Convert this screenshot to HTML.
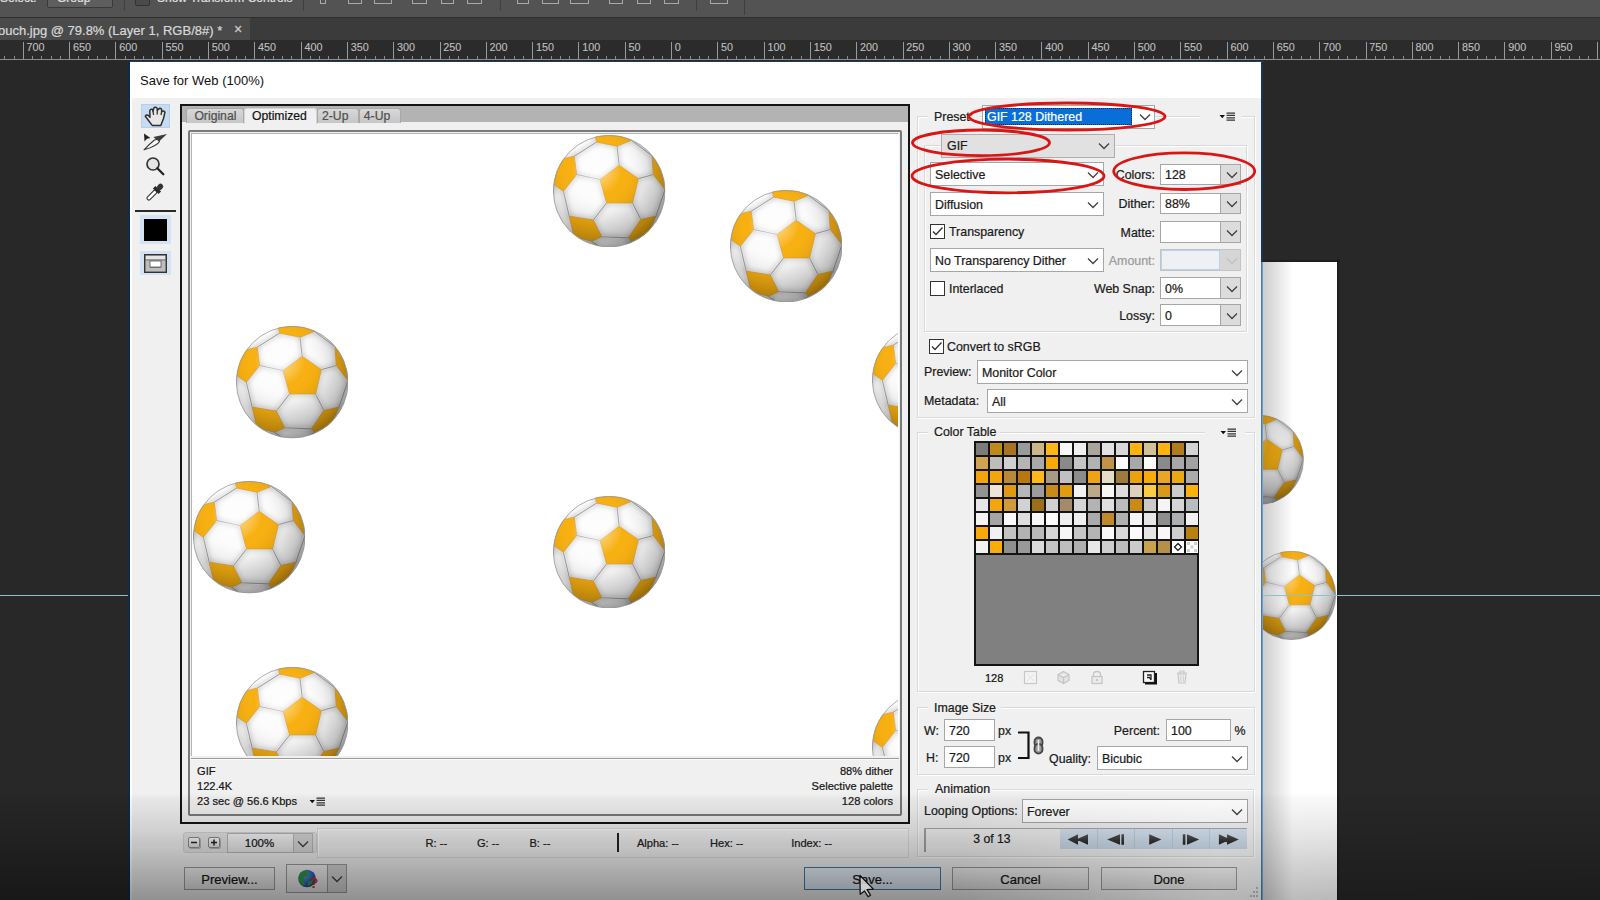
<!DOCTYPE html><html><head><meta charset="utf-8"><title>Save for Web</title><style>
*{margin:0;padding:0;box-sizing:border-box}
html,body{width:1600px;height:900px;overflow:hidden;background:#282828;font-family:"Liberation Sans",sans-serif;position:relative}
.a{position:absolute}
.t{position:absolute;white-space:nowrap;color:#1b1b1b;line-height:1;-webkit-text-stroke:0.22px}
</style></head><body>
<div class="a" style="left:0px;top:0px;width:1600px;height:17px;background:#535353"></div>
<div class="a" style="left:0px;top:17px;width:1600px;height:1px;background:#2e2e2e"></div>
<div class="a" style="left:0px;top:18px;width:1600px;height:22px;background:#3b3b3b"></div>
<div class="a" style="left:0px;top:18px;width:250px;height:22px;background:#4a4a4a"></div>
<div class="t" style="left:-2.00px;top:24.00px;font-size:13px;color:#d8d8d8;">ouch.jpg @ 79.8% (Layer 1, RGB/8#) *</div>
<div class="t" style="left:234.00px;top:22.15px;font-size:14px;color:#cfcfcf;">&#215;</div>
<div class="a" style="left:0px;top:40px;width:1600px;height:20px;background:#2b2b2b"></div>
<div class="a" style="left:0px;top:59px;width:1600px;height:1px;background:#8c8c8c"></div>
<div class="a" style="left:-23.5px;top:42px;width:1px;height:17px;background:#9a9a9a"></div>
<div class="t" style="left:-19.70px;top:42.06px;font-size:10.8px;color:#c0c0c0;-webkit-text-stroke:0.1px">750</div>
<div class="a" style="left:-14.2px;top:56px;width:1px;height:3px;background:#8a8a8a"></div>
<div class="a" style="left:-5.0px;top:56px;width:1px;height:3px;background:#8a8a8a"></div>
<div class="a" style="left:4.3px;top:56px;width:1px;height:3px;background:#8a8a8a"></div>
<div class="a" style="left:13.5px;top:56px;width:1px;height:3px;background:#8a8a8a"></div>
<div class="a" style="left:22.8px;top:42px;width:1px;height:17px;background:#9a9a9a"></div>
<div class="t" style="left:26.60px;top:42.06px;font-size:10.8px;color:#c0c0c0;-webkit-text-stroke:0.1px">700</div>
<div class="a" style="left:32.1px;top:56px;width:1px;height:3px;background:#8a8a8a"></div>
<div class="a" style="left:41.3px;top:56px;width:1px;height:3px;background:#8a8a8a"></div>
<div class="a" style="left:50.6px;top:56px;width:1px;height:3px;background:#8a8a8a"></div>
<div class="a" style="left:59.8px;top:56px;width:1px;height:3px;background:#8a8a8a"></div>
<div class="a" style="left:69.1px;top:42px;width:1px;height:17px;background:#9a9a9a"></div>
<div class="t" style="left:72.90px;top:42.06px;font-size:10.8px;color:#c0c0c0;-webkit-text-stroke:0.1px">650</div>
<div class="a" style="left:78.4px;top:56px;width:1px;height:3px;background:#8a8a8a"></div>
<div class="a" style="left:87.6px;top:56px;width:1px;height:3px;background:#8a8a8a"></div>
<div class="a" style="left:96.9px;top:56px;width:1px;height:3px;background:#8a8a8a"></div>
<div class="a" style="left:106.1px;top:56px;width:1px;height:3px;background:#8a8a8a"></div>
<div class="a" style="left:115.4px;top:42px;width:1px;height:17px;background:#9a9a9a"></div>
<div class="t" style="left:119.20px;top:42.06px;font-size:10.8px;color:#c0c0c0;-webkit-text-stroke:0.1px">600</div>
<div class="a" style="left:124.7px;top:56px;width:1px;height:3px;background:#8a8a8a"></div>
<div class="a" style="left:133.9px;top:56px;width:1px;height:3px;background:#8a8a8a"></div>
<div class="a" style="left:143.2px;top:56px;width:1px;height:3px;background:#8a8a8a"></div>
<div class="a" style="left:152.4px;top:56px;width:1px;height:3px;background:#8a8a8a"></div>
<div class="a" style="left:161.7px;top:42px;width:1px;height:17px;background:#9a9a9a"></div>
<div class="t" style="left:165.50px;top:42.06px;font-size:10.8px;color:#c0c0c0;-webkit-text-stroke:0.1px">550</div>
<div class="a" style="left:171.0px;top:56px;width:1px;height:3px;background:#8a8a8a"></div>
<div class="a" style="left:180.2px;top:56px;width:1px;height:3px;background:#8a8a8a"></div>
<div class="a" style="left:189.5px;top:56px;width:1px;height:3px;background:#8a8a8a"></div>
<div class="a" style="left:198.7px;top:56px;width:1px;height:3px;background:#8a8a8a"></div>
<div class="a" style="left:208.0px;top:42px;width:1px;height:17px;background:#9a9a9a"></div>
<div class="t" style="left:211.80px;top:42.06px;font-size:10.8px;color:#c0c0c0;-webkit-text-stroke:0.1px">500</div>
<div class="a" style="left:217.3px;top:56px;width:1px;height:3px;background:#8a8a8a"></div>
<div class="a" style="left:226.5px;top:56px;width:1px;height:3px;background:#8a8a8a"></div>
<div class="a" style="left:235.8px;top:56px;width:1px;height:3px;background:#8a8a8a"></div>
<div class="a" style="left:245.0px;top:56px;width:1px;height:3px;background:#8a8a8a"></div>
<div class="a" style="left:254.3px;top:42px;width:1px;height:17px;background:#9a9a9a"></div>
<div class="t" style="left:258.10px;top:42.06px;font-size:10.8px;color:#c0c0c0;-webkit-text-stroke:0.1px">450</div>
<div class="a" style="left:263.6px;top:56px;width:1px;height:3px;background:#8a8a8a"></div>
<div class="a" style="left:272.8px;top:56px;width:1px;height:3px;background:#8a8a8a"></div>
<div class="a" style="left:282.1px;top:56px;width:1px;height:3px;background:#8a8a8a"></div>
<div class="a" style="left:291.3px;top:56px;width:1px;height:3px;background:#8a8a8a"></div>
<div class="a" style="left:300.6px;top:42px;width:1px;height:17px;background:#9a9a9a"></div>
<div class="t" style="left:304.40px;top:42.06px;font-size:10.8px;color:#c0c0c0;-webkit-text-stroke:0.1px">400</div>
<div class="a" style="left:309.9px;top:56px;width:1px;height:3px;background:#8a8a8a"></div>
<div class="a" style="left:319.1px;top:56px;width:1px;height:3px;background:#8a8a8a"></div>
<div class="a" style="left:328.4px;top:56px;width:1px;height:3px;background:#8a8a8a"></div>
<div class="a" style="left:337.6px;top:56px;width:1px;height:3px;background:#8a8a8a"></div>
<div class="a" style="left:346.9px;top:42px;width:1px;height:17px;background:#9a9a9a"></div>
<div class="t" style="left:350.70px;top:42.06px;font-size:10.8px;color:#c0c0c0;-webkit-text-stroke:0.1px">350</div>
<div class="a" style="left:356.2px;top:56px;width:1px;height:3px;background:#8a8a8a"></div>
<div class="a" style="left:365.4px;top:56px;width:1px;height:3px;background:#8a8a8a"></div>
<div class="a" style="left:374.7px;top:56px;width:1px;height:3px;background:#8a8a8a"></div>
<div class="a" style="left:383.9px;top:56px;width:1px;height:3px;background:#8a8a8a"></div>
<div class="a" style="left:393.2px;top:42px;width:1px;height:17px;background:#9a9a9a"></div>
<div class="t" style="left:397.00px;top:42.06px;font-size:10.8px;color:#c0c0c0;-webkit-text-stroke:0.1px">300</div>
<div class="a" style="left:402.5px;top:56px;width:1px;height:3px;background:#8a8a8a"></div>
<div class="a" style="left:411.7px;top:56px;width:1px;height:3px;background:#8a8a8a"></div>
<div class="a" style="left:421.0px;top:56px;width:1px;height:3px;background:#8a8a8a"></div>
<div class="a" style="left:430.2px;top:56px;width:1px;height:3px;background:#8a8a8a"></div>
<div class="a" style="left:439.5px;top:42px;width:1px;height:17px;background:#9a9a9a"></div>
<div class="t" style="left:443.30px;top:42.06px;font-size:10.8px;color:#c0c0c0;-webkit-text-stroke:0.1px">250</div>
<div class="a" style="left:448.8px;top:56px;width:1px;height:3px;background:#8a8a8a"></div>
<div class="a" style="left:458.0px;top:56px;width:1px;height:3px;background:#8a8a8a"></div>
<div class="a" style="left:467.3px;top:56px;width:1px;height:3px;background:#8a8a8a"></div>
<div class="a" style="left:476.5px;top:56px;width:1px;height:3px;background:#8a8a8a"></div>
<div class="a" style="left:485.8px;top:42px;width:1px;height:17px;background:#9a9a9a"></div>
<div class="t" style="left:489.60px;top:42.06px;font-size:10.8px;color:#c0c0c0;-webkit-text-stroke:0.1px">200</div>
<div class="a" style="left:495.1px;top:56px;width:1px;height:3px;background:#8a8a8a"></div>
<div class="a" style="left:504.3px;top:56px;width:1px;height:3px;background:#8a8a8a"></div>
<div class="a" style="left:513.6px;top:56px;width:1px;height:3px;background:#8a8a8a"></div>
<div class="a" style="left:522.8px;top:56px;width:1px;height:3px;background:#8a8a8a"></div>
<div class="a" style="left:532.1px;top:42px;width:1px;height:17px;background:#9a9a9a"></div>
<div class="t" style="left:535.90px;top:42.06px;font-size:10.8px;color:#c0c0c0;-webkit-text-stroke:0.1px">150</div>
<div class="a" style="left:541.4px;top:56px;width:1px;height:3px;background:#8a8a8a"></div>
<div class="a" style="left:550.6px;top:56px;width:1px;height:3px;background:#8a8a8a"></div>
<div class="a" style="left:559.9px;top:56px;width:1px;height:3px;background:#8a8a8a"></div>
<div class="a" style="left:569.1px;top:56px;width:1px;height:3px;background:#8a8a8a"></div>
<div class="a" style="left:578.4px;top:42px;width:1px;height:17px;background:#9a9a9a"></div>
<div class="t" style="left:582.20px;top:42.06px;font-size:10.8px;color:#c0c0c0;-webkit-text-stroke:0.1px">100</div>
<div class="a" style="left:587.7px;top:56px;width:1px;height:3px;background:#8a8a8a"></div>
<div class="a" style="left:596.9px;top:56px;width:1px;height:3px;background:#8a8a8a"></div>
<div class="a" style="left:606.2px;top:56px;width:1px;height:3px;background:#8a8a8a"></div>
<div class="a" style="left:615.4px;top:56px;width:1px;height:3px;background:#8a8a8a"></div>
<div class="a" style="left:624.7px;top:42px;width:1px;height:17px;background:#9a9a9a"></div>
<div class="t" style="left:628.50px;top:42.06px;font-size:10.8px;color:#c0c0c0;-webkit-text-stroke:0.1px">50</div>
<div class="a" style="left:634.0px;top:56px;width:1px;height:3px;background:#8a8a8a"></div>
<div class="a" style="left:643.2px;top:56px;width:1px;height:3px;background:#8a8a8a"></div>
<div class="a" style="left:652.5px;top:56px;width:1px;height:3px;background:#8a8a8a"></div>
<div class="a" style="left:661.7px;top:56px;width:1px;height:3px;background:#8a8a8a"></div>
<div class="a" style="left:671.0px;top:42px;width:1px;height:17px;background:#9a9a9a"></div>
<div class="t" style="left:674.80px;top:42.06px;font-size:10.8px;color:#c0c0c0;-webkit-text-stroke:0.1px">0</div>
<div class="a" style="left:680.3px;top:56px;width:1px;height:3px;background:#8a8a8a"></div>
<div class="a" style="left:689.5px;top:56px;width:1px;height:3px;background:#8a8a8a"></div>
<div class="a" style="left:698.8px;top:56px;width:1px;height:3px;background:#8a8a8a"></div>
<div class="a" style="left:708.0px;top:56px;width:1px;height:3px;background:#8a8a8a"></div>
<div class="a" style="left:717.3px;top:42px;width:1px;height:17px;background:#9a9a9a"></div>
<div class="t" style="left:721.10px;top:42.06px;font-size:10.8px;color:#c0c0c0;-webkit-text-stroke:0.1px">50</div>
<div class="a" style="left:726.6px;top:56px;width:1px;height:3px;background:#8a8a8a"></div>
<div class="a" style="left:735.8px;top:56px;width:1px;height:3px;background:#8a8a8a"></div>
<div class="a" style="left:745.1px;top:56px;width:1px;height:3px;background:#8a8a8a"></div>
<div class="a" style="left:754.3px;top:56px;width:1px;height:3px;background:#8a8a8a"></div>
<div class="a" style="left:763.6px;top:42px;width:1px;height:17px;background:#9a9a9a"></div>
<div class="t" style="left:767.40px;top:42.06px;font-size:10.8px;color:#c0c0c0;-webkit-text-stroke:0.1px">100</div>
<div class="a" style="left:772.9px;top:56px;width:1px;height:3px;background:#8a8a8a"></div>
<div class="a" style="left:782.1px;top:56px;width:1px;height:3px;background:#8a8a8a"></div>
<div class="a" style="left:791.4px;top:56px;width:1px;height:3px;background:#8a8a8a"></div>
<div class="a" style="left:800.6px;top:56px;width:1px;height:3px;background:#8a8a8a"></div>
<div class="a" style="left:809.9px;top:42px;width:1px;height:17px;background:#9a9a9a"></div>
<div class="t" style="left:813.70px;top:42.06px;font-size:10.8px;color:#c0c0c0;-webkit-text-stroke:0.1px">150</div>
<div class="a" style="left:819.2px;top:56px;width:1px;height:3px;background:#8a8a8a"></div>
<div class="a" style="left:828.4px;top:56px;width:1px;height:3px;background:#8a8a8a"></div>
<div class="a" style="left:837.7px;top:56px;width:1px;height:3px;background:#8a8a8a"></div>
<div class="a" style="left:846.9px;top:56px;width:1px;height:3px;background:#8a8a8a"></div>
<div class="a" style="left:856.2px;top:42px;width:1px;height:17px;background:#9a9a9a"></div>
<div class="t" style="left:860.00px;top:42.06px;font-size:10.8px;color:#c0c0c0;-webkit-text-stroke:0.1px">200</div>
<div class="a" style="left:865.5px;top:56px;width:1px;height:3px;background:#8a8a8a"></div>
<div class="a" style="left:874.7px;top:56px;width:1px;height:3px;background:#8a8a8a"></div>
<div class="a" style="left:884.0px;top:56px;width:1px;height:3px;background:#8a8a8a"></div>
<div class="a" style="left:893.2px;top:56px;width:1px;height:3px;background:#8a8a8a"></div>
<div class="a" style="left:902.5px;top:42px;width:1px;height:17px;background:#9a9a9a"></div>
<div class="t" style="left:906.30px;top:42.06px;font-size:10.8px;color:#c0c0c0;-webkit-text-stroke:0.1px">250</div>
<div class="a" style="left:911.8px;top:56px;width:1px;height:3px;background:#8a8a8a"></div>
<div class="a" style="left:921.0px;top:56px;width:1px;height:3px;background:#8a8a8a"></div>
<div class="a" style="left:930.3px;top:56px;width:1px;height:3px;background:#8a8a8a"></div>
<div class="a" style="left:939.5px;top:56px;width:1px;height:3px;background:#8a8a8a"></div>
<div class="a" style="left:948.8px;top:42px;width:1px;height:17px;background:#9a9a9a"></div>
<div class="t" style="left:952.60px;top:42.06px;font-size:10.8px;color:#c0c0c0;-webkit-text-stroke:0.1px">300</div>
<div class="a" style="left:958.1px;top:56px;width:1px;height:3px;background:#8a8a8a"></div>
<div class="a" style="left:967.3px;top:56px;width:1px;height:3px;background:#8a8a8a"></div>
<div class="a" style="left:976.6px;top:56px;width:1px;height:3px;background:#8a8a8a"></div>
<div class="a" style="left:985.8px;top:56px;width:1px;height:3px;background:#8a8a8a"></div>
<div class="a" style="left:995.1px;top:42px;width:1px;height:17px;background:#9a9a9a"></div>
<div class="t" style="left:998.90px;top:42.06px;font-size:10.8px;color:#c0c0c0;-webkit-text-stroke:0.1px">350</div>
<div class="a" style="left:1004.4px;top:56px;width:1px;height:3px;background:#8a8a8a"></div>
<div class="a" style="left:1013.6px;top:56px;width:1px;height:3px;background:#8a8a8a"></div>
<div class="a" style="left:1022.9px;top:56px;width:1px;height:3px;background:#8a8a8a"></div>
<div class="a" style="left:1032.1px;top:56px;width:1px;height:3px;background:#8a8a8a"></div>
<div class="a" style="left:1041.4px;top:42px;width:1px;height:17px;background:#9a9a9a"></div>
<div class="t" style="left:1045.20px;top:42.06px;font-size:10.8px;color:#c0c0c0;-webkit-text-stroke:0.1px">400</div>
<div class="a" style="left:1050.7px;top:56px;width:1px;height:3px;background:#8a8a8a"></div>
<div class="a" style="left:1059.9px;top:56px;width:1px;height:3px;background:#8a8a8a"></div>
<div class="a" style="left:1069.2px;top:56px;width:1px;height:3px;background:#8a8a8a"></div>
<div class="a" style="left:1078.4px;top:56px;width:1px;height:3px;background:#8a8a8a"></div>
<div class="a" style="left:1087.7px;top:42px;width:1px;height:17px;background:#9a9a9a"></div>
<div class="t" style="left:1091.50px;top:42.06px;font-size:10.8px;color:#c0c0c0;-webkit-text-stroke:0.1px">450</div>
<div class="a" style="left:1097.0px;top:56px;width:1px;height:3px;background:#8a8a8a"></div>
<div class="a" style="left:1106.2px;top:56px;width:1px;height:3px;background:#8a8a8a"></div>
<div class="a" style="left:1115.5px;top:56px;width:1px;height:3px;background:#8a8a8a"></div>
<div class="a" style="left:1124.7px;top:56px;width:1px;height:3px;background:#8a8a8a"></div>
<div class="a" style="left:1134.0px;top:42px;width:1px;height:17px;background:#9a9a9a"></div>
<div class="t" style="left:1137.80px;top:42.06px;font-size:10.8px;color:#c0c0c0;-webkit-text-stroke:0.1px">500</div>
<div class="a" style="left:1143.3px;top:56px;width:1px;height:3px;background:#8a8a8a"></div>
<div class="a" style="left:1152.5px;top:56px;width:1px;height:3px;background:#8a8a8a"></div>
<div class="a" style="left:1161.8px;top:56px;width:1px;height:3px;background:#8a8a8a"></div>
<div class="a" style="left:1171.0px;top:56px;width:1px;height:3px;background:#8a8a8a"></div>
<div class="a" style="left:1180.3px;top:42px;width:1px;height:17px;background:#9a9a9a"></div>
<div class="t" style="left:1184.10px;top:42.06px;font-size:10.8px;color:#c0c0c0;-webkit-text-stroke:0.1px">550</div>
<div class="a" style="left:1189.6px;top:56px;width:1px;height:3px;background:#8a8a8a"></div>
<div class="a" style="left:1198.8px;top:56px;width:1px;height:3px;background:#8a8a8a"></div>
<div class="a" style="left:1208.1px;top:56px;width:1px;height:3px;background:#8a8a8a"></div>
<div class="a" style="left:1217.3px;top:56px;width:1px;height:3px;background:#8a8a8a"></div>
<div class="a" style="left:1226.6px;top:42px;width:1px;height:17px;background:#9a9a9a"></div>
<div class="t" style="left:1230.40px;top:42.06px;font-size:10.8px;color:#c0c0c0;-webkit-text-stroke:0.1px">600</div>
<div class="a" style="left:1235.9px;top:56px;width:1px;height:3px;background:#8a8a8a"></div>
<div class="a" style="left:1245.1px;top:56px;width:1px;height:3px;background:#8a8a8a"></div>
<div class="a" style="left:1254.4px;top:56px;width:1px;height:3px;background:#8a8a8a"></div>
<div class="a" style="left:1263.6px;top:56px;width:1px;height:3px;background:#8a8a8a"></div>
<div class="a" style="left:1272.9px;top:42px;width:1px;height:17px;background:#9a9a9a"></div>
<div class="t" style="left:1276.70px;top:42.06px;font-size:10.8px;color:#c0c0c0;-webkit-text-stroke:0.1px">650</div>
<div class="a" style="left:1282.2px;top:56px;width:1px;height:3px;background:#8a8a8a"></div>
<div class="a" style="left:1291.4px;top:56px;width:1px;height:3px;background:#8a8a8a"></div>
<div class="a" style="left:1300.7px;top:56px;width:1px;height:3px;background:#8a8a8a"></div>
<div class="a" style="left:1309.9px;top:56px;width:1px;height:3px;background:#8a8a8a"></div>
<div class="a" style="left:1319.2px;top:42px;width:1px;height:17px;background:#9a9a9a"></div>
<div class="t" style="left:1323.00px;top:42.06px;font-size:10.8px;color:#c0c0c0;-webkit-text-stroke:0.1px">700</div>
<div class="a" style="left:1328.5px;top:56px;width:1px;height:3px;background:#8a8a8a"></div>
<div class="a" style="left:1337.7px;top:56px;width:1px;height:3px;background:#8a8a8a"></div>
<div class="a" style="left:1347.0px;top:56px;width:1px;height:3px;background:#8a8a8a"></div>
<div class="a" style="left:1356.2px;top:56px;width:1px;height:3px;background:#8a8a8a"></div>
<div class="a" style="left:1365.5px;top:42px;width:1px;height:17px;background:#9a9a9a"></div>
<div class="t" style="left:1369.30px;top:42.06px;font-size:10.8px;color:#c0c0c0;-webkit-text-stroke:0.1px">750</div>
<div class="a" style="left:1374.8px;top:56px;width:1px;height:3px;background:#8a8a8a"></div>
<div class="a" style="left:1384.0px;top:56px;width:1px;height:3px;background:#8a8a8a"></div>
<div class="a" style="left:1393.3px;top:56px;width:1px;height:3px;background:#8a8a8a"></div>
<div class="a" style="left:1402.5px;top:56px;width:1px;height:3px;background:#8a8a8a"></div>
<div class="a" style="left:1411.8px;top:42px;width:1px;height:17px;background:#9a9a9a"></div>
<div class="t" style="left:1415.60px;top:42.06px;font-size:10.8px;color:#c0c0c0;-webkit-text-stroke:0.1px">800</div>
<div class="a" style="left:1421.1px;top:56px;width:1px;height:3px;background:#8a8a8a"></div>
<div class="a" style="left:1430.3px;top:56px;width:1px;height:3px;background:#8a8a8a"></div>
<div class="a" style="left:1439.6px;top:56px;width:1px;height:3px;background:#8a8a8a"></div>
<div class="a" style="left:1448.8px;top:56px;width:1px;height:3px;background:#8a8a8a"></div>
<div class="a" style="left:1458.1px;top:42px;width:1px;height:17px;background:#9a9a9a"></div>
<div class="t" style="left:1461.90px;top:42.06px;font-size:10.8px;color:#c0c0c0;-webkit-text-stroke:0.1px">850</div>
<div class="a" style="left:1467.4px;top:56px;width:1px;height:3px;background:#8a8a8a"></div>
<div class="a" style="left:1476.6px;top:56px;width:1px;height:3px;background:#8a8a8a"></div>
<div class="a" style="left:1485.9px;top:56px;width:1px;height:3px;background:#8a8a8a"></div>
<div class="a" style="left:1495.1px;top:56px;width:1px;height:3px;background:#8a8a8a"></div>
<div class="a" style="left:1504.4px;top:42px;width:1px;height:17px;background:#9a9a9a"></div>
<div class="t" style="left:1508.20px;top:42.06px;font-size:10.8px;color:#c0c0c0;-webkit-text-stroke:0.1px">900</div>
<div class="a" style="left:1513.7px;top:56px;width:1px;height:3px;background:#8a8a8a"></div>
<div class="a" style="left:1522.9px;top:56px;width:1px;height:3px;background:#8a8a8a"></div>
<div class="a" style="left:1532.2px;top:56px;width:1px;height:3px;background:#8a8a8a"></div>
<div class="a" style="left:1541.4px;top:56px;width:1px;height:3px;background:#8a8a8a"></div>
<div class="a" style="left:1550.7px;top:42px;width:1px;height:17px;background:#9a9a9a"></div>
<div class="t" style="left:1554.50px;top:42.06px;font-size:10.8px;color:#c0c0c0;-webkit-text-stroke:0.1px">950</div>
<div class="a" style="left:1560.0px;top:56px;width:1px;height:3px;background:#8a8a8a"></div>
<div class="a" style="left:1569.2px;top:56px;width:1px;height:3px;background:#8a8a8a"></div>
<div class="a" style="left:1578.5px;top:56px;width:1px;height:3px;background:#8a8a8a"></div>
<div class="a" style="left:1587.7px;top:56px;width:1px;height:3px;background:#8a8a8a"></div>
<div class="a" style="left:1597.0px;top:42px;width:1px;height:17px;background:#9a9a9a"></div>
<div class="t" style="left:1600.80px;top:42.06px;font-size:10.8px;color:#c0c0c0;-webkit-text-stroke:0.1px">1000</div>
<div class="a" style="left:1606.3px;top:56px;width:1px;height:3px;background:#8a8a8a"></div>
<div class="a" style="left:1615.5px;top:56px;width:1px;height:3px;background:#8a8a8a"></div>
<div class="a" style="left:1624.8px;top:56px;width:1px;height:3px;background:#8a8a8a"></div>
<div class="a" style="left:1634.0px;top:56px;width:1px;height:3px;background:#8a8a8a"></div>
<div class="a" style="left:47px;top:-6px;width:66px;height:14px;background:#5e5e5e;border:1px solid #3a3a3a;border-radius:2px"></div>
<div class="a" style="left:124px;top:0px;width:1px;height:11px;background:#3f3f3f"></div>
<div class="a" style="left:135px;top:-4px;width:15px;height:10px;background:#4a4a4a;border:1px solid #333;border-radius:2px"></div>
<div class="t" style="left:0.00px;top:-8.16px;font-size:12px;color:#e0e0e0;">Select:</div>
<div class="t" style="left:57.00px;top:-8.16px;font-size:12px;color:#e0e0e0;">Group</div>
<div class="t" style="left:157.00px;top:-8.16px;font-size:12px;color:#e0e0e0;">Show Transform Controls</div>
<div class="a" style="left:303px;top:0px;width:1px;height:11px;background:#3f3f3f"></div>
<div class="a" style="left:500px;top:0px;width:1px;height:11px;background:#3f3f3f"></div>
<div class="a" style="left:696px;top:0px;width:1px;height:11px;background:#3f3f3f"></div>
<div class="a" style="left:744px;top:0px;width:1px;height:15px;background:#3f3f3f"></div>
<div class="a" style="left:320px;top:-3px;width:6px;height:7px;border:1.2px solid #a8a8a8;border-top:none"></div>
<div class="a" style="left:348px;top:-3px;width:14px;height:7px;border:1.2px solid #a8a8a8;border-top:none"></div>
<div class="a" style="left:374px;top:-3px;width:18px;height:7px;border:1.2px solid #a8a8a8;border-top:none"></div>
<div class="a" style="left:412px;top:-3px;width:15px;height:7px;border:1.2px solid #a8a8a8;border-top:none"></div>
<div class="a" style="left:441px;top:-3px;width:13px;height:7px;border:1.2px solid #a8a8a8;border-top:none"></div>
<div class="a" style="left:467px;top:-3px;width:15px;height:7px;border:1.2px solid #a8a8a8;border-top:none"></div>
<div class="a" style="left:517px;top:-3px;width:12px;height:7px;border:1.2px solid #a8a8a8;border-top:none"></div>
<div class="a" style="left:542px;top:-3px;width:17px;height:7px;border:1.2px solid #a8a8a8;border-top:none"></div>
<div class="a" style="left:570px;top:-3px;width:19px;height:7px;border:1.2px solid #a8a8a8;border-top:none"></div>
<div class="a" style="left:609px;top:-3px;width:14px;height:7px;border:1.2px solid #a8a8a8;border-top:none"></div>
<div class="a" style="left:637px;top:-3px;width:14px;height:7px;border:1.2px solid #a8a8a8;border-top:none"></div>
<div class="a" style="left:664px;top:-3px;width:15px;height:7px;border:1.2px solid #a8a8a8;border-top:none"></div>
<div class="a" style="left:710px;top:-3px;width:18px;height:7px;border:1.2px solid #a8a8a8;border-top:none"></div>
<div class="a" style="left:0px;top:595px;width:130px;height:1px;background:#86c3d3"></div>
<div class="a" style="left:1263px;top:595px;width:337px;height:1px;background:#86c3d3"></div>
<svg width="0" height="0" style="position:absolute"><defs>
<radialGradient id="shade" cx="-22" cy="-38" r="142" gradientUnits="userSpaceOnUse">
<stop offset="0" stop-color="#fff" stop-opacity="0.6"/><stop offset="0.32" stop-color="#fff" stop-opacity="0"/><stop offset="0.55" stop-color="#000" stop-opacity="0.05"/><stop offset="0.75" stop-color="#000" stop-opacity="0.17"/><stop offset="0.9" stop-color="#000" stop-opacity="0.28"/><stop offset="1" stop-color="#000" stop-opacity="0.4"/></radialGradient>
<clipPath id="bclip"><circle cx="0" cy="0" r="100"/></clipPath><filter id="bblur" x="-20%" y="-20%" width="140%" height="140%"><feGaussianBlur stdDeviation="4"/></filter>
<symbol id="ball" viewBox="-100 -100 200 200">
<circle cx="0" cy="0" r="100" fill="#fcfcfc"/>
<g clip-path="url(#bclip)">
<g filter="url(#bblur)" stroke="#000" stroke-opacity="0.12" stroke-width="9" fill="none"><path d="M17.8,-46 L13.9,-80.1 M51.9,-22.3 L78.6,-29.7 M41.5,20.8 L56.4,50.4 M-4.5,20.8 L-28.2,51.3 M-16.3,-20.8 L-57.9,-29.7 M-22.3,-87.5 L-62.3,-62.3 M39.5,-90.5 L76.3,-62.9 M-81.6,0 L-71.2,44.5 M-13.4,81 L34.1,83.1 M99.4,-3 L83.1,44.5 M-31.2,89 L-20,97 M40.1,89 L30,95 M-98.5,-11.9 L-99,5"/><polygon points="17.8,-46.0 51.9,-22.3 41.5,20.8 -4.5,20.8 -16.3,-20.8"/><polygon points="-24.6,-97.0 -4.5,-99.4 25.2,-97.9 39.5,-90.5 13.9,-80.1 -22.3,-87.5"/><polygon points="-62.3,-62.3 -57.9,-29.7 -81.6,0.0 -98.5,-11.9 -93.0,-42.0 -80.0,-58.0"/><polygon points="76.3,-62.9 90.0,-42.0 97.0,-20.0 99.4,-3.0 78.6,-29.7"/><polygon points="-71.2,44.5 -28.2,51.3 -13.4,81.0 -31.2,89.0 -50.0,84.0 -63.8,75.0"/><polygon points="56.4,50.4 83.1,44.5 75.0,62.0 68.2,74.2 40.1,89.0 34.1,83.1"/></g>
<path d="M17.8,-46 L13.9,-80.1 M51.9,-22.3 L78.6,-29.7 M41.5,20.8 L56.4,50.4 M-4.5,20.8 L-28.2,51.3 M-16.3,-20.8 L-57.9,-29.7 M-22.3,-87.5 L-62.3,-62.3 M39.5,-90.5 L76.3,-62.9 M-81.6,0 L-71.2,44.5 M-13.4,81 L34.1,83.1 M99.4,-3 L83.1,44.5 M-31.2,89 L-20,97 M40.1,89 L30,95 M-98.5,-11.9 L-99,5" stroke="#fff" stroke-width="4" fill="none" stroke-opacity="0.7"/>
<path d="M17.8,-46 L13.9,-80.1 M51.9,-22.3 L78.6,-29.7 M41.5,20.8 L56.4,50.4 M-4.5,20.8 L-28.2,51.3 M-16.3,-20.8 L-57.9,-29.7 M-22.3,-87.5 L-62.3,-62.3 M39.5,-90.5 L76.3,-62.9 M-81.6,0 L-71.2,44.5 M-13.4,81 L34.1,83.1 M99.4,-3 L83.1,44.5 M-31.2,89 L-20,97 M40.1,89 L30,95 M-98.5,-11.9 L-99,5" stroke="#a4a4a4" stroke-width="2" fill="none"/>
<g fill="#f8b010" stroke="#dca540" stroke-width="1.6">
<polygon points="17.8,-46.0 51.9,-22.3 41.5,20.8 -4.5,20.8 -16.3,-20.8"/><polygon points="-24.6,-97.0 -4.5,-99.4 25.2,-97.9 39.5,-90.5 13.9,-80.1 -22.3,-87.5"/><polygon points="-62.3,-62.3 -57.9,-29.7 -81.6,0.0 -98.5,-11.9 -93.0,-42.0 -80.0,-58.0"/><polygon points="76.3,-62.9 90.0,-42.0 97.0,-20.0 99.4,-3.0 78.6,-29.7"/><polygon points="-71.2,44.5 -28.2,51.3 -13.4,81.0 -31.2,89.0 -50.0,84.0 -63.8,75.0"/><polygon points="56.4,50.4 83.1,44.5 75.0,62.0 68.2,74.2 40.1,89.0 34.1,83.1"/>
</g>
<circle cx="0" cy="0" r="100" fill="url(#shade)"/>
</g>
<circle cx="0" cy="0" r="99.3" fill="none" stroke="#9a9a9a" stroke-width="1.4"/>
</symbol></defs></svg>
<div class="a" style="left:1263px;top:259px;width:77px;height:3px;background:linear-gradient(rgba(0,0,0,0),rgba(0,0,0,.35))"></div>
<div class="a" style="left:1337px;top:259px;width:3px;height:641px;background:linear-gradient(to right,rgba(0,0,0,.35),rgba(0,0,0,0))"></div>
<div class="a" style="left:1263px;top:262px;width:74px;height:638px;background:#fff;overflow:hidden">
<svg class="a" style="left:-49.2px;top:153.1px" width="89.8" height="89.8"><use href="#ball" width="100%" height="100%"/></svg>
<svg class="a" style="left:-15.8px;top:288.5px" width="89.0" height="89.0"><use href="#ball" width="100%" height="100%"/></svg>
<div class="a" style="left:0;top:0;width:30px;height:638px;background:linear-gradient(to right,rgba(0,0,0,.2),rgba(0,0,0,0))"></div>
</div>
<div class="a" style="left:1263px;top:595px;width:337px;height:1px;background:#86c3d3"></div>
<div class="a" style="left:128px;top:61px;width:1135px;height:839px;background:#f0f0f0;border:1px solid #1c3f63;border-left:2px solid #0e2b4b;border-bottom:none"></div>
<div class="a" style="left:130px;top:98px;width:1.5px;height:802px;background:#fff"></div>
<div class="a" style="left:130px;top:62px;width:1132px;height:36px;background:#fff"></div>
<div class="a" style="left:1261px;top:62px;width:2px;height:200px;background:#133656"></div>
<div class="a" style="left:1261px;top:262px;width:2px;height:638px;background:linear-gradient(to right,#2f6aa0,#7fb2de)"></div>
<div class="t" style="left:140.00px;top:73.50px;font-size:13px;color:#111;-webkit-text-stroke:0">Save for Web (100%)</div>
<div class="a" style="left:141px;top:104px;width:29px;height:24px;background:#c6dcf2;border:1px solid #b3cfea"></div>
<div class="a" style="left:135px;top:210px;width:41px;height:1.5px;background:#2a2a2a"></div>
<div class="a" style="left:140px;top:215px;width:31px;height:29px;background:#d3e3f3"></div>
<div class="a" style="left:144px;top:219px;width:23px;height:22px;background:#000"></div>
<div class="a" style="left:140px;top:251px;width:31px;height:24px;background:#d3e3f3"></div>
<svg class="a" style="left:136px;top:100px" width="40" height="30" viewBox="0 0 40 30"><path d="M9.3,16.3 Q10.4,14.2 12.3,15.3 L14,17.2 L13.8,11 Q14.2,8.9 16,9.3 Q16.8,9.6 17,11.5 L17.6,8.6 Q18.8,6.5 20.6,7.6 Q21.3,8.2 21.3,10.5 L22.4,9.2 Q24,7.6 25.4,9 Q25.9,9.6 25.6,12 L26.4,11.4 Q28.2,10.5 28.9,12.3 L27.6,18.2 L24.8,25.4 L16.2,25.4 Z" fill="#e6e6e6" stroke="#2e2e2e" stroke-width="1.5" stroke-linejoin="round"/><path d="M17,11.5 L17.6,15 M21.3,10.5 L21.2,14.5 M25.6,12 L25,15" stroke="#333" stroke-width="1.3"/></svg>
<svg class="a" style="left:142px;top:131px" width="26" height="20" viewBox="0 0 26 20"><path d="M2,2.5 L8.5,7 L5,7.8 L2.5,10.5 Z" fill="#222"/><path d="M11.5,6 L25,3 L16.5,11 Z" fill="#3c3c3c"/><path d="M12.5,9 Q16,7.5 17.5,10.5 Q15,15 2,18.8 Q8,12.5 12.5,9 Z" fill="#fafafa" stroke="#333" stroke-width="1.1" stroke-linejoin="round"/></svg>
<svg class="a" style="left:144px;top:155px" width="22" height="22" viewBox="0 0 22 22"><circle cx="9" cy="9" r="6" fill="#e4e4e4" stroke="#333" stroke-width="1.7"/><path d="M13.3,13.3 L19.3,19.3" stroke="#222" stroke-width="2.3" stroke-linecap="round"/></svg>
<svg class="a" style="left:144px;top:181px" width="22" height="22" viewBox="0 0 22 22"><g transform="rotate(-45 11 11)"><rect x="0.5" y="9.2" width="12" height="3.6" rx="1.5" fill="#fff" stroke="#333" stroke-width="1.1"/><rect x="12" y="7" width="3.6" height="8" fill="#2a2a2a"/><rect x="15" y="8.3" width="6.5" height="5.4" rx="2.6" fill="#333"/></g></svg>
<svg class="a" style="left:144px;top:254px" width="23" height="19" viewBox="0 0 23 19"><rect x="0.7" y="0.7" width="21.6" height="17.6" fill="#bdbdbd" stroke="#333" stroke-width="1.4"/><rect x="2" y="2" width="19" height="3" fill="#e6e6e6"/><rect x="6" y="7" width="11" height="6" fill="#fff" stroke="#555" stroke-width="0.8"/><path d="M1,6 L22,6 M6,13.5 L17,13.5" stroke="#666" stroke-width="0.8"/></svg>
<div class="a" style="left:180px;top:104px;width:730px;height:720px;background:#f0f0f0;border:2px solid #151515"></div>
<div class="a" style="left:182px;top:106px;width:726px;height:16px;background:#b3b3b3"></div>
<div class="a" style="left:186px;top:108px;width:58px;height:15px;background:linear-gradient(#d8d8d8,#c6c6c6);border:1px solid #a8a8a8;border-bottom:none;border-radius:3px 3px 0 0"></div>
<div class="t" style="left:194.40px;top:110.07px;font-size:12.2px;color:#505050;">Original</div>
<div class="a" style="left:317px;top:108px;width:42px;height:15px;background:linear-gradient(#d8d8d8,#c6c6c6);border:1px solid #a8a8a8;border-bottom:none;border-radius:3px 3px 0 0"></div>
<div class="t" style="left:322.00px;top:110.07px;font-size:12.2px;color:#505050;">2-Up</div>
<div class="a" style="left:359px;top:108px;width:42px;height:15px;background:linear-gradient(#d8d8d8,#c6c6c6);border:1px solid #a8a8a8;border-bottom:none;border-radius:3px 3px 0 0"></div>
<div class="t" style="left:363.80px;top:110.07px;font-size:12.2px;color:#505050;">4-Up</div>
<div class="a" style="left:244px;top:108px;width:73px;height:16px;background:#f0f0f0;border:1px solid #d6d6d6;border-bottom:none;border-radius:3px 3px 0 0"></div>
<div class="t" style="left:252.00px;top:110.07px;font-size:12.2px;color:#111;-webkit-text-stroke:0.2px #111">Optimized</div>
<div class="a" style="left:188px;top:130px;width:714px;height:686px;border:2px solid #7a7a7a;border-radius:2px"></div>
<div class="a" style="left:191px;top:133px;width:708px;height:623px;border-top:1px solid #b4b4b4;border-left:1px solid #b4b4b4;border-right:1px solid #fff"></div>
<div class="a" style="left:192px;top:134px;width:706px;height:622px;background:#fff;overflow:hidden">
<svg class="a" style="left:361.4px;top:0.5px" width="112.4" height="112.4"><use href="#ball" width="100%" height="100%"/></svg>
<svg class="a" style="left:537.6px;top:55.6px" width="112.4" height="112.4"><use href="#ball" width="100%" height="100%"/></svg>
<svg class="a" style="left:43.8px;top:192.3px" width="112.4" height="112.4"><use href="#ball" width="100%" height="100%"/></svg>
<svg class="a" style="left:0.5px;top:347.3px" width="112.4" height="112.4"><use href="#ball" width="100%" height="100%"/></svg>
<svg class="a" style="left:360.8px;top:361.8px" width="112.4" height="112.4"><use href="#ball" width="100%" height="100%"/></svg>
<svg class="a" style="left:43.9px;top:533.4px" width="112.4" height="112.4"><use href="#ball" width="100%" height="100%"/></svg>
<svg class="a" style="left:679.8px;top:189.8px" width="112.4" height="112.4"><use href="#ball" width="100%" height="100%"/></svg>
<svg class="a" style="left:679.8px;top:556.8px" width="112.4" height="112.4"><use href="#ball" width="100%" height="100%"/></svg>
</div>
<div class="a" style="left:191px;top:758px;width:708px;height:1px;background:#9a9a9a"></div>
<div class="a" style="left:191px;top:759px;width:708px;height:1px;background:#fafafa"></div>
<div class="t" style="left:197.00px;top:766.20px;font-size:11.1px;color:#161616;">GIF</div>
<div class="t" style="left:197.00px;top:781.20px;font-size:11.1px;color:#161616;">122.4K</div>
<div class="t" style="left:197.00px;top:796.20px;font-size:11.1px;color:#161616;">23 sec @ 56.6 Kbps</div>
<div class="t" style="left:293.00px;width:600px;text-align:right;top:766.20px;font-size:11.1px;color:#161616;">88% dither</div>
<div class="t" style="left:293.00px;width:600px;text-align:right;top:781.20px;font-size:11.1px;color:#161616;">Selective palette</div>
<div class="t" style="left:293.00px;width:600px;text-align:right;top:796.20px;font-size:11.1px;color:#161616;">128 colors</div>
<svg class="a" style="left:309px;top:797px" width="17" height="10" viewBox="0 0 17 10"><path d="M0.5,3 L6,3 L3.25,6.2 Z" fill="#111"/><path d="M7.5,1 H16 M7.5,3.4 H16 M7.5,5.8 H16 M7.5,8.2 H16" stroke="#333" stroke-width="1.25"/></svg>
<div class="a" style="left:183px;top:832px;width:134px;height:21px;background:#e2e2e2;border:1px solid #d2d2d2;border-radius:3px"></div>
<div class="a" style="left:188px;top:837px;width:12px;height:11px;background:linear-gradient(#fafafa,#dadada);border:1px solid #8a8a8a;border-radius:2px;box-shadow:1px 1px 0 #b0b0b0"></div>
<div class="a" style="left:208px;top:837px;width:12px;height:11px;background:linear-gradient(#fafafa,#dadada);border:1px solid #8a8a8a;border-radius:2px;box-shadow:1px 1px 0 #b0b0b0"></div>
<svg class="a" style="left:188px;top:837px" width="12" height="11"><path d="M3,5.5 H9" stroke="#222" stroke-width="1.5"/></svg>
<svg class="a" style="left:208px;top:837px" width="12" height="11"><path d="M3,5.5 H9 M6,2.5 V8.5" stroke="#222" stroke-width="1.5"/></svg>
<div class="a" style="left:227px;top:833px;width:86px;height:20px;background:linear-gradient(#f4f4f4,#e4e4e4);border:1px solid #b5b5b5"></div>
<div class="a" style="left:293px;top:833px;width:20px;height:20px;background:#d6d6d6;border:1px solid #b5b5b5"></div>
<svg class="a" style="left:297px;top:840px" width="12" height="8" viewBox="0 0 12 8"><path d="M1 1.5 L6 6.5 L11 1.5" fill="none" stroke="#404040" stroke-width="1.3"/></svg>
<div class="t" style="left:-40.50px;width:600px;text-align:center;top:838.07px;font-size:11.5px;color:#161616;">100%</div>
<div class="a" style="left:317px;top:828px;width:592px;height:30px;border:1px solid #dadada;box-shadow:inset 1px 1px 0 #fff"></div>
<div class="t" style="left:425.60px;top:837.60px;font-size:11.1px;color:#202020;">R: --</div>
<div class="t" style="left:476.90px;top:837.60px;font-size:11.1px;color:#202020;">G: --</div>
<div class="t" style="left:529.40px;top:837.60px;font-size:11.1px;color:#202020;">B: --</div>
<div class="t" style="left:636.90px;top:837.60px;font-size:11.1px;color:#202020;">Alpha: --</div>
<div class="t" style="left:710.00px;top:837.60px;font-size:11.1px;color:#202020;">Hex: --</div>
<div class="t" style="left:791.20px;top:837.60px;font-size:11.1px;color:#202020;">Index: --</div>
<div class="a" style="left:617px;top:833px;width:2px;height:19px;background:#222"></div>
<div class="a" style="left:184px;top:867px;width:91px;height:23px;background:linear-gradient(#f2f2f2,#e2e2e2);border:1px solid #9a9a9a"></div>
<div class="t" style="left:-70.50px;width:600px;text-align:center;top:872.50px;font-size:13px;color:#151515;">Preview...</div>
<div class="a" style="left:286px;top:864px;width:61px;height:29px;background:linear-gradient(#f2f2f2,#e2e2e2);border:1px solid #9a9a9a"></div>
<div class="a" style="left:327px;top:864px;width:20px;height:29px;background:#d4d4d4;border:1px solid #9a9a9a"></div>
<svg class="a" style="left:331px;top:875px" width="12" height="8" viewBox="0 0 12 8"><path d="M1 1.5 L6 6.5 L11 1.5" fill="none" stroke="#404040" stroke-width="1.3"/></svg>
<svg class="a" style="left:297px;top:868px" width="22" height="21" viewBox="0 0 22 21"><defs><radialGradient id="glb" cx="0.35" cy="0.3" r="0.75"><stop offset="0" stop-color="#5f9be6"/><stop offset="1" stop-color="#1c3f8a"/></radialGradient></defs><circle cx="10" cy="10.5" r="8.8" fill="url(#glb)"/><path d="M3,5.5 Q6,2.5 10,2.6 Q9,5 11.5,6.5 Q10,9 7,9 Q5.5,12 7.5,15 Q8.5,18.5 5.5,17 Q2,14 1.8,10 Q1.8,7.5 3,5.5 Z" fill="#2d9a3e"/><path d="M12,13 Q14.5,12 15.5,14.5 Q13.5,17.5 11,18 Q10.5,15 12,13 Z" fill="#2d9a3e"/><text x="12.5" y="19.5" font-family="Liberation Sans" font-weight="bold" font-size="14.5" fill="#d42a2a">?</text></svg>
<div class="a" style="left:804px;top:867px;width:137px;height:23px;background:linear-gradient(#eaf2fa,#dce8f4);border:1px solid #3d7ab0"></div>
<div class="t" style="left:572.50px;width:600px;text-align:center;top:872.50px;font-size:13px;color:#151515;">Save...</div>
<div class="a" style="left:952px;top:867px;width:137px;height:23px;background:linear-gradient(#f2f2f2,#e2e2e2);border:1px solid #9a9a9a"></div>
<div class="t" style="left:720.50px;width:600px;text-align:center;top:872.50px;font-size:13px;color:#151515;">Cancel</div>
<div class="a" style="left:1101px;top:867px;width:136px;height:23px;background:linear-gradient(#f2f2f2,#e2e2e2);border:1px solid #9a9a9a"></div>
<div class="t" style="left:869.00px;width:600px;text-align:center;top:872.50px;font-size:13px;color:#151515;">Done</div>
<div class="a" style="left:917px;top:116px;width:338px;height:302px;border:1px solid #d9d9d9;box-shadow:inset 1px 1px 0 #fff, 1px 1px 0 #fff"></div>
<div class="a" style="left:928px;top:110px;width:52px;height:12px;background:#f0f0f0"></div>
<div class="t" style="left:934.00px;top:110.50px;font-size:12.4px;color:#1b1b1b;">Preset:</div>
<div class="a" style="left:1200px;top:110px;width:42px;height:12px;background:#f0f0f0"></div>
<svg class="a" style="left:1219px;top:112px" width="17" height="10" viewBox="0 0 17 10"><path d="M0.5,3 L6,3 L3.25,6.2 Z" fill="#111"/><path d="M7.5,1 H16 M7.5,3.4 H16 M7.5,5.8 H16 M7.5,8.2 H16" stroke="#333" stroke-width="1.25"/></svg>
<div class="a" style="left:982px;top:105px;width:173px;height:24px;background:#fff;border:1px solid #a6a6a6"></div>
<div class="a" style="left:985px;top:108px;width:147px;height:17px;background:#0a6ed8;outline:1px dotted #0b2a55;outline-offset:-1px"></div>
<div class="t" style="left:987.00px;top:110.50px;font-size:12.4px;color:#ffffff;">GIF 128 Dithered</div>
<svg class="a" style="left:1139px;top:113px" width="12" height="8" viewBox="0 0 12 8"><path d="M1 1.5 L6 6.5 L11 1.5" fill="none" stroke="#404040" stroke-width="1.3"/></svg>
<div class="a" style="left:924px;top:145px;width:323px;height:187px;border:1px solid #d9d9d9;box-shadow:inset 1px 1px 0 #fff, 1px 1px 0 #fff"></div>
<div class="a" style="left:941px;top:134px;width:174px;height:24px;background:#e1e1e1;border:1px solid #adadad"></div>
<div class="t" style="left:947.00px;top:140.00px;font-size:12.4px;color:#1b1b1b;">GIF</div>
<svg class="a" style="left:1098px;top:142px" width="12" height="8" viewBox="0 0 12 8"><path d="M1 1.5 L6 6.5 L11 1.5" fill="none" stroke="#404040" stroke-width="1.3"/></svg>
<div class="a" style="left:930px;top:162px;width:174px;height:24px;background:#fff;border:1px solid #a6a6a6"></div>
<div class="t" style="left:935.00px;top:168.60px;font-size:12.4px;color:#1b1b1b;">Selective</div>
<svg class="a" style="left:1087px;top:170.5px" width="12" height="8" viewBox="0 0 12 8"><path d="M1 1.5 L6 6.5 L11 1.5" fill="none" stroke="#404040" stroke-width="1.3"/></svg>
<div class="a" style="left:930px;top:192px;width:174px;height:24px;background:#fff;border:1px solid #a6a6a6"></div>
<div class="t" style="left:935.00px;top:198.60px;font-size:12.4px;color:#1b1b1b;">Diffusion</div>
<svg class="a" style="left:1087px;top:200.5px" width="12" height="8" viewBox="0 0 12 8"><path d="M1 1.5 L6 6.5 L11 1.5" fill="none" stroke="#404040" stroke-width="1.3"/></svg>
<div class="a" style="left:930px;top:224px;width:15px;height:15px;background:#fff;border:1px solid #333"></div>
<svg class="a" style="left:930px;top:224px" width="15" height="15" viewBox="0 0 15 15"><path d="M3 7.5 L6 10.5 L12.5 3.5" fill="none" stroke="#333" stroke-width="1.3"/></svg>
<div class="t" style="left:949.00px;top:225.50px;font-size:12.4px;color:#1b1b1b;">Transparency</div>
<div class="a" style="left:930px;top:248px;width:174px;height:24px;background:#fff;border:1px solid #a6a6a6"></div>
<div class="t" style="left:935.00px;top:254.60px;font-size:12.4px;color:#1b1b1b;">No Transparency Dither</div>
<svg class="a" style="left:1087px;top:256.5px" width="12" height="8" viewBox="0 0 12 8"><path d="M1 1.5 L6 6.5 L11 1.5" fill="none" stroke="#404040" stroke-width="1.3"/></svg>
<div class="a" style="left:930px;top:281px;width:15px;height:15px;background:#fff;border:1px solid #333"></div>
<div class="t" style="left:949.00px;top:282.50px;font-size:12.4px;color:#1b1b1b;">Interlaced</div>
<div class="t" style="left:555.00px;width:600px;text-align:right;top:169.20px;font-size:12.4px;color:#1b1b1b;">Colors:</div>
<div class="a" style="left:1160px;top:164px;width:81px;height:21px;background:#fff;border:1px solid #a6a6a6"></div>
<div class="a" style="left:1220px;top:164px;width:21px;height:21px;background:#dcdcdc;border:1px solid #a6a6a6"></div>
<div class="t" style="left:1165.00px;top:169.10px;font-size:12.4px;color:#1b1b1b;">128</div>
<svg class="a" style="left:1226px;top:171.0px" width="12" height="8" viewBox="0 0 12 8"><path d="M1 1.5 L6 6.5 L11 1.5" fill="none" stroke="#404040" stroke-width="1.3"/></svg>
<div class="t" style="left:555.00px;width:600px;text-align:right;top:198.20px;font-size:12.4px;color:#1b1b1b;">Dither:</div>
<div class="a" style="left:1160px;top:193px;width:81px;height:21px;background:#fff;border:1px solid #a6a6a6"></div>
<div class="a" style="left:1220px;top:193px;width:21px;height:21px;background:#dcdcdc;border:1px solid #a6a6a6"></div>
<div class="t" style="left:1165.00px;top:198.10px;font-size:12.4px;color:#1b1b1b;">88%</div>
<svg class="a" style="left:1226px;top:200.0px" width="12" height="8" viewBox="0 0 12 8"><path d="M1 1.5 L6 6.5 L11 1.5" fill="none" stroke="#404040" stroke-width="1.3"/></svg>
<div class="t" style="left:555.00px;width:600px;text-align:right;top:226.70px;font-size:12.4px;color:#1b1b1b;">Matte:</div>
<div class="a" style="left:1160px;top:221px;width:81px;height:22px;background:#fff;border:1px solid #a6a6a6"></div>
<div class="a" style="left:1220px;top:221px;width:21px;height:22px;background:#dcdcdc;border:1px solid #a6a6a6"></div>
<svg class="a" style="left:1226px;top:228.5px" width="12" height="8" viewBox="0 0 12 8"><path d="M1 1.5 L6 6.5 L11 1.5" fill="none" stroke="#404040" stroke-width="1.3"/></svg>
<div class="t" style="left:555.00px;width:600px;text-align:right;top:254.70px;font-size:12.4px;color:#9a9a9a;">Amount:</div>
<div class="a" style="left:1160px;top:249px;width:81px;height:22px;background:#d6d6d6;border:1px solid #c4c4c4"></div>
<div class="a" style="left:1161px;top:250px;width:59px;height:20px;background:#eef0f3;border:1px solid #b9d1ea"></div>
<svg class="a" style="left:1226px;top:256.5px" width="12" height="8" viewBox="0 0 12 8"><path d="M1 1.5 L6 6.5 L11 1.5" fill="none" stroke="#c0c0c0" stroke-width="1.3"/></svg>
<div class="t" style="left:555.00px;width:600px;text-align:right;top:282.70px;font-size:12.4px;color:#1b1b1b;">Web Snap:</div>
<div class="a" style="left:1160px;top:277px;width:81px;height:22px;background:#fff;border:1px solid #a6a6a6"></div>
<div class="a" style="left:1220px;top:277px;width:21px;height:22px;background:#dcdcdc;border:1px solid #a6a6a6"></div>
<div class="t" style="left:1165.00px;top:282.60px;font-size:12.4px;color:#1b1b1b;">0%</div>
<svg class="a" style="left:1226px;top:284.5px" width="12" height="8" viewBox="0 0 12 8"><path d="M1 1.5 L6 6.5 L11 1.5" fill="none" stroke="#404040" stroke-width="1.3"/></svg>
<div class="t" style="left:555.00px;width:600px;text-align:right;top:309.70px;font-size:12.4px;color:#1b1b1b;">Lossy:</div>
<div class="a" style="left:1160px;top:304px;width:81px;height:22px;background:#fff;border:1px solid #a6a6a6"></div>
<div class="a" style="left:1220px;top:304px;width:21px;height:22px;background:#dcdcdc;border:1px solid #a6a6a6"></div>
<div class="t" style="left:1165.00px;top:309.60px;font-size:12.4px;color:#1b1b1b;">0</div>
<svg class="a" style="left:1226px;top:311.5px" width="12" height="8" viewBox="0 0 12 8"><path d="M1 1.5 L6 6.5 L11 1.5" fill="none" stroke="#404040" stroke-width="1.3"/></svg>
<div class="a" style="left:929px;top:339px;width:15px;height:15px;background:#fff;border:1px solid #333"></div>
<svg class="a" style="left:929px;top:339px" width="15" height="15" viewBox="0 0 15 15"><path d="M3 7.5 L6 10.5 L12.5 3.5" fill="none" stroke="#333" stroke-width="1.3"/></svg>
<div class="t" style="left:947.00px;top:341.10px;font-size:12.4px;color:#1b1b1b;">Convert to sRGB</div>
<div class="t" style="left:924.00px;top:366.00px;font-size:12.4px;color:#1b1b1b;">Preview:</div>
<div class="a" style="left:977px;top:360px;width:271px;height:24px;background:#fff;border:1px solid #a6a6a6"></div>
<div class="t" style="left:982.00px;top:366.60px;font-size:12.4px;color:#1b1b1b;">Monitor Color</div>
<svg class="a" style="left:1231px;top:368.5px" width="12" height="8" viewBox="0 0 12 8"><path d="M1 1.5 L6 6.5 L11 1.5" fill="none" stroke="#404040" stroke-width="1.3"/></svg>
<div class="t" style="left:924.00px;top:394.50px;font-size:12.4px;color:#1b1b1b;">Metadata:</div>
<div class="a" style="left:987px;top:389px;width:261px;height:24px;background:#fff;border:1px solid #a6a6a6"></div>
<div class="t" style="left:992.00px;top:395.60px;font-size:12.4px;color:#1b1b1b;">All</div>
<svg class="a" style="left:1231px;top:397.5px" width="12" height="8" viewBox="0 0 12 8"><path d="M1 1.5 L6 6.5 L11 1.5" fill="none" stroke="#404040" stroke-width="1.3"/></svg>
<div class="a" style="left:917px;top:432px;width:338px;height:260px;border:1px solid #d9d9d9;box-shadow:inset 1px 1px 0 #fff, 1px 1px 0 #fff"></div>
<div class="a" style="left:928px;top:426px;width:72px;height:12px;background:#f0f0f0"></div>
<div class="t" style="left:934.00px;top:426.00px;font-size:12.4px;color:#1b1b1b;">Color Table</div>
<div class="a" style="left:1205px;top:426px;width:40px;height:12px;background:#f0f0f0"></div>
<svg class="a" style="left:1220px;top:428px" width="17" height="10" viewBox="0 0 17 10"><path d="M0.5,3 L6,3 L3.25,6.2 Z" fill="#111"/><path d="M7.5,1 H16 M7.5,3.4 H16 M7.5,5.8 H16 M7.5,8.2 H16" stroke="#333" stroke-width="1.25"/></svg>
<div class="a" style="left:974px;top:441px;width:225px;height:225px;background:#808080;border:2px solid #141414"></div>
<div class="a" style="left:976px;top:443px;width:221px;height:112px;background:#141414"></div>
<div class="a" style="left:976px;top:443px;width:12px;height:12px;background:#7d7b78"></div>
<div class="a" style="left:990px;top:443px;width:12px;height:12px;background:#c08a1a"></div>
<div class="a" style="left:1004px;top:443px;width:12px;height:12px;background:#a87420"></div>
<div class="a" style="left:1018px;top:443px;width:12px;height:12px;background:#9a9a9a"></div>
<div class="a" style="left:1032px;top:443px;width:12px;height:12px;background:#cdb48a"></div>
<div class="a" style="left:1046px;top:443px;width:12px;height:12px;background:#fbb714"></div>
<div class="a" style="left:1060px;top:443px;width:12px;height:12px;background:#f7f7f7"></div>
<div class="a" style="left:1074px;top:443px;width:12px;height:12px;background:#efefef"></div>
<div class="a" style="left:1088px;top:443px;width:12px;height:12px;background:#aaa49c"></div>
<div class="a" style="left:1102px;top:443px;width:12px;height:12px;background:#e2e2e2"></div>
<div class="a" style="left:1116px;top:443px;width:12px;height:12px;background:#d8d8d8"></div>
<div class="a" style="left:1130px;top:443px;width:12px;height:12px;background:#fcb40c"></div>
<div class="a" style="left:1144px;top:443px;width:12px;height:12px;background:#d2c09a"></div>
<div class="a" style="left:1158px;top:443px;width:12px;height:12px;background:#fbb30a"></div>
<div class="a" style="left:1172px;top:443px;width:12px;height:12px;background:#b07c1c"></div>
<div class="a" style="left:1186px;top:443px;width:12px;height:12px;background:#d3d3d3"></div>
<div class="a" style="left:976px;top:457px;width:12px;height:12px;background:#d0a450"></div>
<div class="a" style="left:990px;top:457px;width:12px;height:12px;background:#bdbdbd"></div>
<div class="a" style="left:1004px;top:457px;width:12px;height:12px;background:#cfcfcf"></div>
<div class="a" style="left:1018px;top:457px;width:12px;height:12px;background:#b5b5b5"></div>
<div class="a" style="left:1032px;top:457px;width:12px;height:12px;background:#a9a9a9"></div>
<div class="a" style="left:1046px;top:457px;width:12px;height:12px;background:#f5aa0a"></div>
<div class="a" style="left:1060px;top:457px;width:12px;height:12px;background:#8a8a8a"></div>
<div class="a" style="left:1074px;top:457px;width:12px;height:12px;background:#c5c5c5"></div>
<div class="a" style="left:1088px;top:457px;width:12px;height:12px;background:#b2b2b2"></div>
<div class="a" style="left:1102px;top:457px;width:12px;height:12px;background:#c09448"></div>
<div class="a" style="left:1116px;top:457px;width:12px;height:12px;background:#fdfdfd"></div>
<div class="a" style="left:1130px;top:457px;width:12px;height:12px;background:#a9a9a9"></div>
<div class="a" style="left:1144px;top:457px;width:12px;height:12px;background:#fbfbfb"></div>
<div class="a" style="left:1158px;top:457px;width:12px;height:12px;background:#8a8a8a"></div>
<div class="a" style="left:1172px;top:457px;width:12px;height:12px;background:#a8a8a8"></div>
<div class="a" style="left:1186px;top:457px;width:12px;height:12px;background:#a2a2a2"></div>
<div class="a" style="left:976px;top:471px;width:12px;height:12px;background:#f0a410"></div>
<div class="a" style="left:990px;top:471px;width:12px;height:12px;background:#f2a60d"></div>
<div class="a" style="left:1004px;top:471px;width:12px;height:12px;background:#b88a38"></div>
<div class="a" style="left:1018px;top:471px;width:12px;height:12px;background:#b8780f"></div>
<div class="a" style="left:1032px;top:471px;width:12px;height:12px;background:#fcb919"></div>
<div class="a" style="left:1046px;top:471px;width:12px;height:12px;background:#a89a85"></div>
<div class="a" style="left:1060px;top:471px;width:12px;height:12px;background:#c0c0c0"></div>
<div class="a" style="left:1074px;top:471px;width:12px;height:12px;background:#8c8c8c"></div>
<div class="a" style="left:1088px;top:471px;width:12px;height:12px;background:#eca414"></div>
<div class="a" style="left:1102px;top:471px;width:12px;height:12px;background:#e5dcc5"></div>
<div class="a" style="left:1116px;top:471px;width:12px;height:12px;background:#9e7a3e"></div>
<div class="a" style="left:1130px;top:471px;width:12px;height:12px;background:#eba10c"></div>
<div class="a" style="left:1144px;top:471px;width:12px;height:12px;background:#f5ab0a"></div>
<div class="a" style="left:1158px;top:471px;width:12px;height:12px;background:#e9a626"></div>
<div class="a" style="left:1172px;top:471px;width:12px;height:12px;background:#eca810"></div>
<div class="a" style="left:1186px;top:471px;width:12px;height:12px;background:#ababab"></div>
<div class="a" style="left:976px;top:485px;width:12px;height:12px;background:#939393"></div>
<div class="a" style="left:990px;top:485px;width:12px;height:12px;background:#ede6d8"></div>
<div class="a" style="left:1004px;top:485px;width:12px;height:12px;background:#e09a12"></div>
<div class="a" style="left:1018px;top:485px;width:12px;height:12px;background:#b7b7b7"></div>
<div class="a" style="left:1032px;top:485px;width:12px;height:12px;background:#9c9c9c"></div>
<div class="a" style="left:1046px;top:485px;width:12px;height:12px;background:#c98a1c"></div>
<div class="a" style="left:1060px;top:485px;width:12px;height:12px;background:#e09c10"></div>
<div class="a" style="left:1074px;top:485px;width:12px;height:12px;background:#f2f2f2"></div>
<div class="a" style="left:1088px;top:485px;width:12px;height:12px;background:#bba98a"></div>
<div class="a" style="left:1102px;top:485px;width:12px;height:12px;background:#f7f7f7"></div>
<div class="a" style="left:1116px;top:485px;width:12px;height:12px;background:#dddddd"></div>
<div class="a" style="left:1130px;top:485px;width:12px;height:12px;background:#ddd0bd"></div>
<div class="a" style="left:1144px;top:485px;width:12px;height:12px;background:#fccb46"></div>
<div class="a" style="left:1158px;top:485px;width:12px;height:12px;background:#d99a1a"></div>
<div class="a" style="left:1172px;top:485px;width:12px;height:12px;background:#cccccc"></div>
<div class="a" style="left:1186px;top:485px;width:12px;height:12px;background:#fbb00c"></div>
<div class="a" style="left:976px;top:499px;width:12px;height:12px;background:#e6e6e6"></div>
<div class="a" style="left:990px;top:499px;width:12px;height:12px;background:#f3a60c"></div>
<div class="a" style="left:1004px;top:499px;width:12px;height:12px;background:#d19a3a"></div>
<div class="a" style="left:1018px;top:499px;width:12px;height:12px;background:#d2d2d2"></div>
<div class="a" style="left:1032px;top:499px;width:12px;height:12px;background:#9a6e1a"></div>
<div class="a" style="left:1046px;top:499px;width:12px;height:12px;background:#d0d0d0"></div>
<div class="a" style="left:1060px;top:499px;width:12px;height:12px;background:#a48a6a"></div>
<div class="a" style="left:1074px;top:499px;width:12px;height:12px;background:#d5d5d5"></div>
<div class="a" style="left:1088px;top:499px;width:12px;height:12px;background:#b3b3b3"></div>
<div class="a" style="left:1102px;top:499px;width:12px;height:12px;background:#dedede"></div>
<div class="a" style="left:1116px;top:499px;width:12px;height:12px;background:#bcbcbc"></div>
<div class="a" style="left:1130px;top:499px;width:12px;height:12px;background:#c98a14"></div>
<div class="a" style="left:1144px;top:499px;width:12px;height:12px;background:#cacaca"></div>
<div class="a" style="left:1158px;top:499px;width:12px;height:12px;background:#f4f4f4"></div>
<div class="a" style="left:1172px;top:499px;width:12px;height:12px;background:#d5d5d5"></div>
<div class="a" style="left:1186px;top:499px;width:12px;height:12px;background:#b8bbbf"></div>
<div class="a" style="left:976px;top:513px;width:12px;height:12px;background:#f3f3f3"></div>
<div class="a" style="left:990px;top:513px;width:12px;height:12px;background:#a5a5a5"></div>
<div class="a" style="left:1004px;top:513px;width:12px;height:12px;background:#fafafa"></div>
<div class="a" style="left:1018px;top:513px;width:12px;height:12px;background:#dcdcdc"></div>
<div class="a" style="left:1032px;top:513px;width:12px;height:12px;background:#f8f8f8"></div>
<div class="a" style="left:1046px;top:513px;width:12px;height:12px;background:#fdfdfd"></div>
<div class="a" style="left:1060px;top:513px;width:12px;height:12px;background:#eeeeee"></div>
<div class="a" style="left:1074px;top:513px;width:12px;height:12px;background:#efefef"></div>
<div class="a" style="left:1088px;top:513px;width:12px;height:12px;background:#aaaaaa"></div>
<div class="a" style="left:1102px;top:513px;width:12px;height:12px;background:#c08a2a"></div>
<div class="a" style="left:1116px;top:513px;width:12px;height:12px;background:#b0b0b0"></div>
<div class="a" style="left:1130px;top:513px;width:12px;height:12px;background:#f5f5f5"></div>
<div class="a" style="left:1144px;top:513px;width:12px;height:12px;background:#e7e7e7"></div>
<div class="a" style="left:1158px;top:513px;width:12px;height:12px;background:#8e8e8e"></div>
<div class="a" style="left:1172px;top:513px;width:12px;height:12px;background:#adb0b3"></div>
<div class="a" style="left:1186px;top:513px;width:12px;height:12px;background:#f0f0f0"></div>
<div class="a" style="left:976px;top:527px;width:12px;height:12px;background:#f7aa0a"></div>
<div class="a" style="left:990px;top:527px;width:12px;height:12px;background:#f1f1f1"></div>
<div class="a" style="left:1004px;top:527px;width:12px;height:12px;background:#c3c3c3"></div>
<div class="a" style="left:1018px;top:527px;width:12px;height:12px;background:#b2b2b2"></div>
<div class="a" style="left:1032px;top:527px;width:12px;height:12px;background:#bababa"></div>
<div class="a" style="left:1046px;top:527px;width:12px;height:12px;background:#d6d6d6"></div>
<div class="a" style="left:1060px;top:527px;width:12px;height:12px;background:#f6f6f6"></div>
<div class="a" style="left:1074px;top:527px;width:12px;height:12px;background:#c6c6c6"></div>
<div class="a" style="left:1088px;top:527px;width:12px;height:12px;background:#b5b5b5"></div>
<div class="a" style="left:1102px;top:527px;width:12px;height:12px;background:#fafafa"></div>
<div class="a" style="left:1116px;top:527px;width:12px;height:12px;background:#d8d8d8"></div>
<div class="a" style="left:1130px;top:527px;width:12px;height:12px;background:#fbfbfb"></div>
<div class="a" style="left:1144px;top:527px;width:12px;height:12px;background:#e5e5e5"></div>
<div class="a" style="left:1158px;top:527px;width:12px;height:12px;background:#f8f8f8"></div>
<div class="a" style="left:1172px;top:527px;width:12px;height:12px;background:#cecece"></div>
<div class="a" style="left:1186px;top:527px;width:12px;height:12px;background:#b98210"></div>
<div class="a" style="left:976px;top:541px;width:12px;height:12px;background:#f2f2f2"></div>
<div class="a" style="left:990px;top:541px;width:12px;height:12px;background:#f8ad0b"></div>
<div class="a" style="left:1004px;top:541px;width:12px;height:12px;background:#8f8f8f"></div>
<div class="a" style="left:1018px;top:541px;width:12px;height:12px;background:#999999"></div>
<div class="a" style="left:1032px;top:541px;width:12px;height:12px;background:#dadada"></div>
<div class="a" style="left:1046px;top:541px;width:12px;height:12px;background:#c4c4c4"></div>
<div class="a" style="left:1060px;top:541px;width:12px;height:12px;background:#bdbdbd"></div>
<div class="a" style="left:1074px;top:541px;width:12px;height:12px;background:#b0b0b0"></div>
<div class="a" style="left:1088px;top:541px;width:12px;height:12px;background:#e8e8e8"></div>
<div class="a" style="left:1102px;top:541px;width:12px;height:12px;background:#cdcdcd"></div>
<div class="a" style="left:1116px;top:541px;width:12px;height:12px;background:#bdbdbd"></div>
<div class="a" style="left:1130px;top:541px;width:12px;height:12px;background:#cbcbcb"></div>
<div class="a" style="left:1144px;top:541px;width:12px;height:12px;background:#c9a250"></div>
<div class="a" style="left:1158px;top:541px;width:12px;height:12px;background:#b49048"></div>
<div class="a" style="left:1172px;top:541px;width:12px;height:12px;background:#ffffff"></div>
<div class="a" style="left:1186px;top:541px;width:12px;height:12px;background:#ffffff"></div>
<svg class="a" style="left:1172px;top:541px" width="12" height="12"><path d="M6,2.5 L9.5,6 L6,9.5 L2.5,6 Z" fill="none" stroke="#111" stroke-width="1.2"/></svg>
<svg class="a" style="left:1186px;top:541px" width="12" height="12"><path d="M1,1h3v3h-3zM8,1h3v3h-3zM4.5,4.5h3v3h-3zM1,8h3v3h-3zM8,8h3v3h-3z" fill="#cfcfcf"/></svg>
<div class="t" style="left:985.00px;top:673.39px;font-size:11px;color:#111;">128</div>
<svg class="a" style="left:1023px;top:670px" width="15" height="15"><rect x="1.5" y="1.5" width="12" height="12" fill="#f4f4f4" stroke="#c8c8c8" stroke-width="1.2"/><path d="M4,4 L11,11 M11,4 L4,11" stroke="#e0e0e0" stroke-width="1"/></svg>
<svg class="a" style="left:1056px;top:670px" width="15" height="15"><path d="M7.5,1.5 L13,4.5 L13,10.5 L7.5,13.5 L2,10.5 L2,4.5 Z M2,4.5 L7.5,7.5 L13,4.5 M7.5,7.5 L7.5,13.5" fill="#e2e2e2" stroke="#c4c4c4" stroke-width="1.2"/></svg>
<svg class="a" style="left:1090px;top:670px" width="14" height="15"><path d="M3.5,6.5 V4.5 Q3.5,1.5 7,1.5 Q10.5,1.5 10.5,4.5 V6.5" fill="none" stroke="#c4c4c4" stroke-width="1.3"/><rect x="2" y="6.5" width="10" height="7" fill="#eaeaea" stroke="#c4c4c4" stroke-width="1.2"/><circle cx="7" cy="10" r="1" fill="#bbb"/></svg>
<svg class="a" style="left:1142px;top:670px" width="15" height="15"><rect x="1.5" y="1.5" width="11" height="11" fill="#fafafa" stroke="#222" stroke-width="1.3"/><path d="M3,13.5 H14 V3" fill="none" stroke="#111" stroke-width="2"/><path d="M5,5 H9 V10 M5,7.5 H7.5 L9,10" fill="none" stroke="#222" stroke-width="1.3"/></svg>
<svg class="a" style="left:1175px;top:669px" width="14" height="16"><path d="M2,4 H12 M5,4 V2 H9 V4" fill="none" stroke="#c8c8c8" stroke-width="1.2"/><path d="M3,5 L4,14 H10 L11,5 Z" fill="#ececec" stroke="#c8c8c8" stroke-width="1.2"/><path d="M5.7,6.5 V12.5 M8.3,6.5 V12.5" stroke="#cfcfcf"/></svg>
<div class="a" style="left:917px;top:707px;width:338px;height:68px;border:1px solid #d9d9d9;box-shadow:inset 1px 1px 0 #fff, 1px 1px 0 #fff"></div>
<div class="a" style="left:928px;top:701px;width:73px;height:12px;background:#f0f0f0"></div>
<div class="t" style="left:934.00px;top:701.50px;font-size:12.4px;color:#1b1b1b;">Image Size</div>
<div class="t" style="left:924.00px;top:724.50px;font-size:12.4px;color:#1b1b1b;">W:</div>
<div class="a" style="left:944px;top:719px;width:51px;height:22px;background:#fff;border:1px solid #a6a6a6"></div>
<div class="t" style="left:949.00px;top:724.50px;font-size:12.4px;color:#1b1b1b;">720</div>
<div class="t" style="left:998.00px;top:724.50px;font-size:12.4px;color:#1b1b1b;">px</div>
<div class="t" style="left:926.00px;top:751.50px;font-size:12.4px;color:#1b1b1b;">H:</div>
<div class="a" style="left:944px;top:746px;width:51px;height:22px;background:#fff;border:1px solid #a6a6a6"></div>
<div class="t" style="left:949.00px;top:751.50px;font-size:12.4px;color:#1b1b1b;">720</div>
<div class="t" style="left:998.00px;top:751.50px;font-size:12.4px;color:#1b1b1b;">px</div>
<svg class="a" style="left:1017px;top:731px" width="14" height="29"><path d="M1,1.5 H11.5 V27 H1" fill="none" stroke="#111" stroke-width="2.2"/></svg>
<svg class="a" style="left:1033px;top:736px" width="11" height="19" viewBox="0 0 11 19"><rect x="1.5" y="1.5" width="8" height="9.5" rx="4" fill="#9a9a9a" stroke="#444" stroke-width="1.8"/><rect x="1.5" y="8" width="8" height="9.5" rx="4" fill="#9a9a9a" stroke="#444" stroke-width="1.8"/><path d="M5.5,4 V15" stroke="#eee" stroke-width="1.6"/></svg>
<div class="t" style="left:560.00px;width:600px;text-align:right;top:724.50px;font-size:12.4px;color:#1b1b1b;">Percent:</div>
<div class="a" style="left:1166px;top:719px;width:65px;height:22px;background:#fff;border:1px solid #a6a6a6"></div>
<div class="t" style="left:1171.00px;top:724.50px;font-size:12.4px;color:#1b1b1b;">100</div>
<div class="t" style="left:1234.50px;top:724.50px;font-size:12.4px;color:#1b1b1b;">%</div>
<div class="t" style="left:1049.00px;top:752.50px;font-size:12.4px;color:#1b1b1b;">Quality:</div>
<div class="a" style="left:1097px;top:746px;width:151px;height:24px;background:#fff;border:1px solid #a6a6a6"></div>
<div class="t" style="left:1102.00px;top:752.60px;font-size:12.4px;color:#1b1b1b;">Bicubic</div>
<svg class="a" style="left:1231px;top:754.5px" width="12" height="8" viewBox="0 0 12 8"><path d="M1 1.5 L6 6.5 L11 1.5" fill="none" stroke="#404040" stroke-width="1.3"/></svg>
<div class="a" style="left:917px;top:789px;width:337px;height:68px;border:1px solid #d9d9d9;box-shadow:inset 1px 1px 0 #fff, 1px 1px 0 #fff"></div>
<div class="a" style="left:928px;top:783px;width:64px;height:12px;background:#f0f0f0"></div>
<div class="t" style="left:935.00px;top:783.00px;font-size:12.4px;color:#1b1b1b;">Animation</div>
<div class="t" style="left:924.00px;top:805.20px;font-size:12.4px;color:#1b1b1b;">Looping Options:</div>
<div class="a" style="left:1022px;top:799px;width:226px;height:24px;background:#fff;border:1px solid #a6a6a6"></div>
<div class="t" style="left:1027.00px;top:805.60px;font-size:12.4px;color:#1b1b1b;">Forever</div>
<svg class="a" style="left:1231px;top:807.5px" width="12" height="8" viewBox="0 0 12 8"><path d="M1 1.5 L6 6.5 L11 1.5" fill="none" stroke="#404040" stroke-width="1.3"/></svg>
<div class="a" style="left:924px;top:828px;width:137px;height:24px;border-left:2px solid #a0a0a0;border-top:1px solid #d0d0d0"></div>
<div class="t" style="left:692.00px;width:600px;text-align:center;top:832.67px;font-size:12.2px;color:#1b1b1b;">3 of 13</div>
<div class="a" style="left:1060px;top:829px;width:187px;height:20px;background:linear-gradient(#d6e3ef,#c6d6e5)"></div>
<div class="a" style="left:1097.3px;top:829px;width:1px;height:20px;background:#bccbd9"></div>
<div class="a" style="left:1134.4px;top:829px;width:1px;height:20px;background:#bccbd9"></div>
<div class="a" style="left:1171.5px;top:829px;width:1px;height:20px;background:#bccbd9"></div>
<div class="a" style="left:1209.4px;top:829px;width:1px;height:20px;background:#bccbd9"></div>
<div class="a" style="left:924px;top:828px;width:323px;height:1px;background:#a8a8a8"></div>
<svg class="a" style="left:1058px;top:826px" width="192" height="26" viewBox="0 0 192 26"><defs><linearGradient id="navg" x1="0" y1="0" x2="0" y2="1"><stop offset="0" stop-color="#555"/><stop offset="1" stop-color="#222"/></linearGradient></defs><path d="M9.6,13.5 L20,8.2 L20,18.8 Z M18.2,13.5 L30,8.2 L30,18.8 Z M49.2,13.5 L62,8.2 L62,18.8 Z M63.4,8.2 H66 V18.8 H63.4 Z M91.2,8.2 L91.2,18.8 L103.4,13.5 Z M124.8,8.2 H127.4 V18.8 H124.8 Z M129,8.2 L129,18.8 L141.2,13.5 Z M160.9,8.2 L160.9,18.8 L172.4,13.5 Z M169,8.2 L169,18.8 L180.8,13.5 Z" fill="url(#navg)"/></svg>
<svg class="a" style="left:1248px;top:886px" width="12" height="14"><g fill="#b8b8b8"><rect x="8" y="1" width="2" height="2"/><rect x="5" y="5" width="2" height="2"/><rect x="8" y="5" width="2" height="2"/><rect x="2" y="9" width="2" height="2"/><rect x="5" y="9" width="2" height="2"/><rect x="8" y="9" width="2" height="2"/></g></svg>
<div class="a" style="left:0;top:793px;width:1600px;height:107px;background:linear-gradient(to bottom,rgba(0,0,0,0) 0%,rgba(0,0,0,.04) 6%,rgba(0,0,0,.13) 35%,rgba(0,0,0,.27) 70%,rgba(0,0,0,.40) 100%);-webkit-mask-image:linear-gradient(to right,#000 0%,#000 60%,rgba(0,0,0,.62) 76%,rgba(0,0,0,.7) 84%,rgba(0,0,0,.72) 100%)"></div>
<svg class="a" style="left:0;top:0" width="1600" height="900"><g fill="none" stroke="#da1515" stroke-width="2.8">
<ellipse cx="1067" cy="116.5" rx="98" ry="13.5"/>
<ellipse cx="981" cy="142.8" rx="68.5" ry="12.8"/>
<ellipse cx="1008" cy="176" rx="96" ry="16.8"/>
<ellipse cx="1184.2" cy="171.2" rx="70.5" ry="18.3"/>
</g></svg>
<svg class="a" style="left:858px;top:874px" width="18" height="25" viewBox="0 0 18 25"><path d="M2,1.5 L2.2,20.2 L6.5,17 L10.1,22.6 L12.5,21.2 L9,15.6 L15.4,15.1 Z" fill="#d8d8d8" fill-opacity="0.85" stroke="#111" stroke-width="1.3" stroke-linejoin="round"/></svg>
</body></html>
